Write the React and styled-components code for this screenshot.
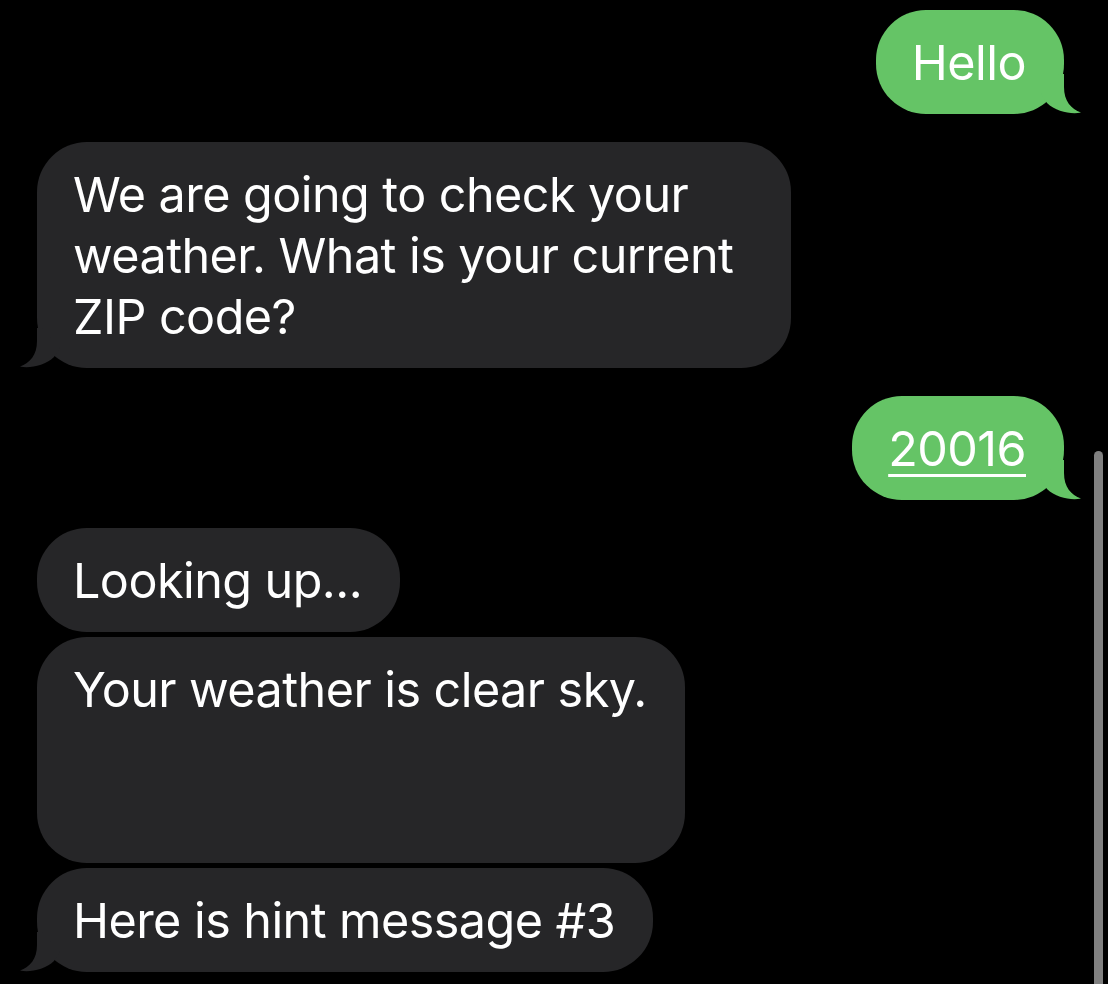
import React from 'react'
import styled, { createGlobalStyle } from 'styled-components'

const GlobalStyle = createGlobalStyle`
    html, body {
        margin: 0;
        padding: 0;
        background: #000;
    }
    body {
        font-family: Inter, "Noto Sans", "Liberation Sans", sans-serif;
        -webkit-font-smoothing: antialiased;
    }
`

const GREEN = '#65c466'
const GREY = '#262628'

const Screen = styled.div`
    position: relative;
    width: 1108px;
    height: 984px;
    overflow: hidden;
    background: #000;
`

const Thread = styled.div`
    display: flex;
    flex-direction: column;
    padding: 10px 44px 0 37px;
`

const Group = styled.div`
    display: flex;
    flex-direction: column;
    align-items: ${(p) => (p.$sent ? 'flex-end' : 'flex-start')};
    gap: 5px;
    margin-bottom: 28px;
`

const Bubble = styled.div`
    position: relative;
    box-sizing: border-box;
    max-width: 754px;
    min-height: ${(p) => (p.$tall ? '226px' : '0')};
    padding: 21.5px 38px 21.5px 36px;
    border-radius: 50px;
    background: ${(p) => (p.$sent ? GREEN : GREY)};
    color: #fff;
    font-size: 48.5px;
    line-height: 61px;
    letter-spacing: -0.55px;
`

const Tail = styled.svg`
    position: absolute;
    bottom: 0;
    width: 40px;
    height: 40px;
    ${(p) => (p.$sent ? 'right: -17px;' : 'left: -17px; transform: scaleX(-1);')}
`

const Link = styled.span`
    text-decoration: underline;
    text-decoration-thickness: 3px;
    text-underline-offset: 8px;
`

const ScrollIndicator = styled.div`
    position: absolute;
    right: 5px;
    top: 451px;
    bottom: -10px;
    width: 9px;
    border-radius: 5px;
    background: #808080;
`

const BubbleTail = ({ sent }) => (
    <Tail $sent={sent} viewBox="0 0 40 40">
        <path
            d="M18 0 L23 0 L23 13 C23 27 30 35 40 38.5 C31 40.5 15 38 6 29 L0 20 Z"
            fill={sent ? GREEN : GREY}
        />
    </Tail>
)

const Message = ({ sent, tail, tall, children }) => (
    <Bubble $sent={sent} $tall={tall}>
        {children}
        {tail && <BubbleTail sent={sent} />}
    </Bubble>
)

const App = () => (
    <Screen>
        <GlobalStyle />
        <Thread>
            <Group $sent>
                <Message sent tail>Hello</Message>
            </Group>
            <Group>
                <Message tail>We are going to check your weather. What is your current ZIP code?</Message>
            </Group>
            <Group $sent>
                <Message sent tail>
                    <Link>20016</Link>
                </Message>
            </Group>
            <Group>
                <Message>Looking up...</Message>
                <Message tall>Your weather is clear sky.</Message>
                <Message tail>Here is hint message #3</Message>
            </Group>
        </Thread>
        <ScrollIndicator />
    </Screen>
)

export default App
